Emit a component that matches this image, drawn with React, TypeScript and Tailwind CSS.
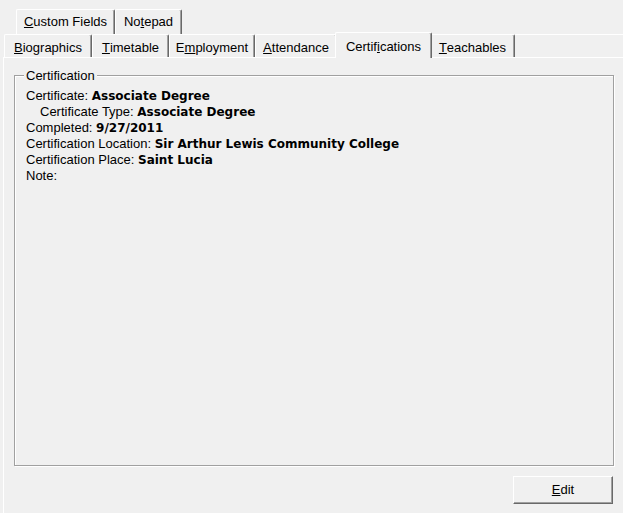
import type { ReactNode } from 'react';

// Classic Win32 property page: two rows of tabs, an etched group box, an Edit button.

type TabDef = { label: ReactNode; width: number };

const topRow: TabDef[] = [
  { label: <><u>C</u>ustom Fields</>, width: 99 },
  { label: <>No<u>t</u>epad</>, width: 67 },
];

const bottomRow: (TabDef & { selected?: boolean })[] = [
  { label: <><u>B</u>iographics</>, width: 88 },
  { label: <><u>T</u>imetable</>, width: 77 },
  { label: <>E<u>m</u>ployment</>, width: 86 },
  { label: <><u>A</u>ttendance</>, width: 82 },
  { label: <>Certif<u>i</u>cations</>, width: 93, selected: true },
  { label: <><u>T</u>eachables</>, width: 85 },
];

function Tab({
  label,
  width,
  selected,
  top,
}: {
  label: ReactNode;
  width: number;
  selected?: boolean;
  top?: boolean;
}) {
  if (selected) {
    return (
      <div
        className="relative z-10 -mx-[2px] -mt-[2px] flex h-[26px] shrink-0 items-start justify-center rounded-t-[2px] border-l border-t border-r border-white border-r-[#696969] bg-[#f0f0f0] pt-[4px] shadow-[inset_-1px_0_0_#a0a0a0]"
        style={{ width: width + 4 }}
      >
        {label}
      </div>
    );
  }
  return (
    <div
      className={
        top
          ? 'flex h-full shrink-0 items-center justify-center rounded-t-[2px] border-l border-t border-r border-white border-r-[#696969] shadow-[inset_-1px_0_0_#a0a0a0]'
          : 'flex h-full shrink-0 items-center justify-center rounded-t-[2px] border-l border-t border-r border-white border-r-[#696969] pt-[3px] shadow-[inset_-1px_0_0_#a0a0a0]'
      }
      style={{ width }}
    >
      {label}
    </div>
  );
}

function Field({ label, value, indent }: { label: string; value?: string; indent?: boolean }) {
  return (
    <div className={indent ? 'ml-[14px] h-[16px] leading-[16px]' : 'h-[16px] leading-[16px]'}>
      {label}
      {value && (
        <>
          {' '}
          <span className="font-['DejaVu_Sans',sans-serif] text-[12px] font-bold">{value}</span>
        </>
      )}
    </div>
  );
}

export default function App() {
  return (
    <div className="h-[513px] w-[623px] overflow-hidden bg-[#f0f0f0] font-['Liberation_Sans',Arial,sans-serif] text-[13px] text-black">
      <div className="ml-[16px] mt-[9px] flex h-[25px] items-stretch">
        {topRow.map((t, i) => (
          <Tab key={i} label={t.label} width={t.width} top />
        ))}
      </div>

      <div className="ml-[4px] flex h-[23px] items-stretch">
        {bottomRow.map((t, i) => (
          <Tab key={i} label={t.label} width={t.width} selected={t.selected} />
        ))}
        <div className="flex-1 border-t border-white" />
      </div>

      <div className="ml-[3px] h-[456px] border-l border-t border-white pl-[10px] pt-[17px]">
        <div className="relative h-[391px] w-[600px] border border-[#a0a0a0] pl-[11px] pt-[12px] shadow-[1px_1px_0_#fff,inset_1px_1px_0_#fff]">
          <span className="absolute left-[9px] top-[-8px] bg-[#f0f0f0] px-[2px] leading-[16px]">
            Certification
          </span>
          <Field label="Certificate:" value="Associate Degree" />
          <Field label="Certificate Type:" value="Associate Degree" indent />
          <Field label="Completed:" value="9/27/2011" />
          <Field label="Certification Location:" value="Sir Arthur Lewis Community College" />
          <Field label="Certification Place:" value="Saint Lucia" />
          <Field label="Note:" />
        </div>

        <div className="mt-[10px] flex w-[599px] justify-end">
          <button
            type="button"
            className="flex h-[28px] w-[100px] items-center justify-center border border-white border-r-[#696969] border-b-[#696969] bg-[#f0f0f0] shadow-[inset_-1px_-1px_0_#a0a0a0]"
          >
            <span>
              <u>E</u>dit
            </span>
          </button>
        </div>
      </div>
    </div>
  );
}
